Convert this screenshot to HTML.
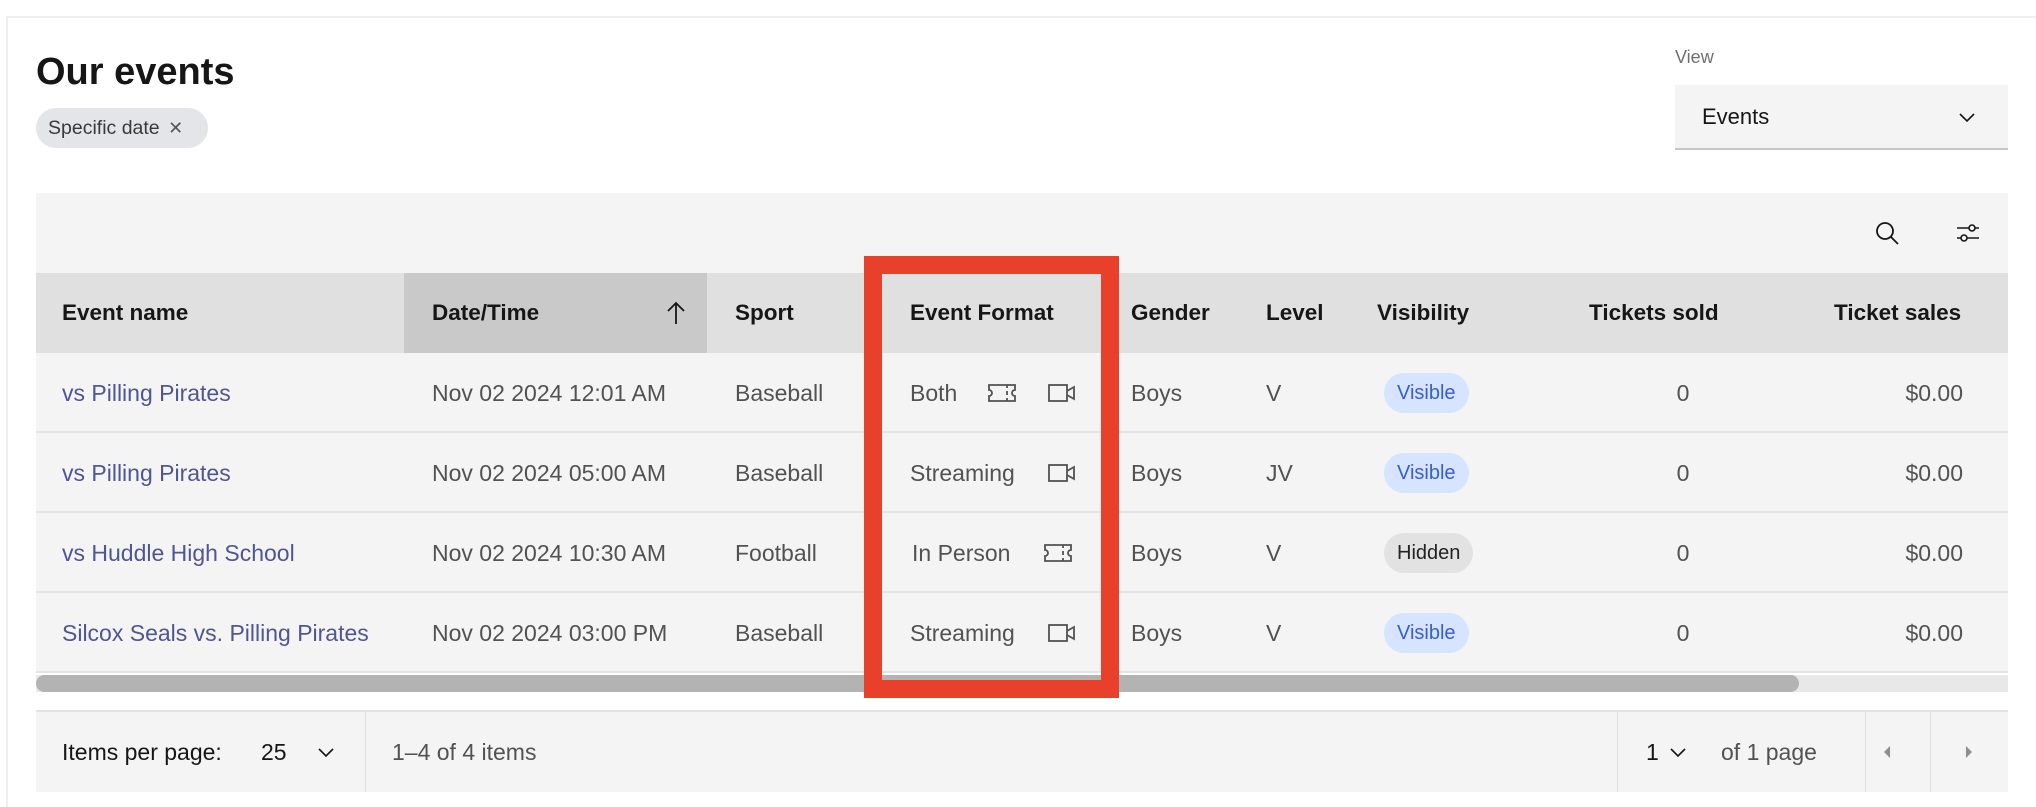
<!DOCTYPE html>
<html><head><meta charset="utf-8"><style>
*{margin:0;padding:0;box-sizing:border-box}
body{width:2036px;height:807px;background:#fff;font-family:"Liberation Sans",sans-serif;position:relative;overflow:hidden;color:#525252}
.a{position:absolute;white-space:nowrap}
.card{position:absolute;left:6px;top:16px;width:2030px;height:791px;border-top:2px solid #f0f0f0;border-left:2px solid #f0f0f0}
.t{font-size:23px;line-height:80px}
.h{font-size:22.5px;font-weight:bold;color:#161616;line-height:80px}
.row{position:absolute;left:36px;width:1972px;height:80px;background:#f4f4f4;border-bottom:2px solid #e4e4e4}
.lnk{color:#4f5690}
.badge{position:absolute;height:40px;border-radius:20px;font-size:20px;line-height:40px;padding:0 13px}
.vis{background:#d6e4ff;color:#3a5fcd}
.hid{background:#e2e2e2;color:#222}
.r{text-align:right;width:200px}
.c{text-align:center;width:100px}
</style></head><body>
<div class="card"></div>
<div class="a" style="left:36px;top:51px;font-size:38px;font-weight:bold;color:#161616">Our events</div>
<div class="a" style="left:36px;top:108px;width:172px;height:40px;border-radius:20px;background:#e3e5e8;font-size:19.5px;line-height:40px;padding-left:12px;color:#393939">Specific date <span style="margin-left:3px;color:#555;font-size:18px">✕</span></div>
<div class="a" style="left:1675px;top:47px;font-size:18px;color:#6f6f6f">View</div>
<div class="a" style="left:1675px;top:85px;width:333px;height:65px;background:#f4f4f4;border-bottom:2px solid #c6c6c6"></div>
<div class="a" style="left:1702px;top:104px;font-size:22px;color:#161616">Events</div>
<svg class="a" style="left:1958px;top:110px" width="18" height="14" viewBox="0 0 18 14"><path d="M2 4l7 7 7-7" fill="none" stroke="#161616" stroke-width="1.6"/></svg>

<div class="a" style="left:36px;top:193px;width:1972px;height:80px;background:#f4f4f4"></div>
<svg class="a" style="left:1874px;top:220px" width="26" height="26" viewBox="0 0 26 26"><circle cx="11" cy="11" r="8" fill="none" stroke="#161616" stroke-width="1.8"/><path d="M17 17l7 7" stroke="#161616" stroke-width="1.8"/></svg>
<svg class="a" style="left:1955px;top:220px" width="26" height="26" viewBox="0 0 26 26" fill="none" stroke="#161616" stroke-width="1.6"><path d="M2 8h22M2 18h22"/><circle cx="17" cy="8" r="3" fill="#f4f4f4"/><circle cx="9" cy="18" r="3" fill="#f4f4f4"/></svg>

<div class="a" style="left:36px;top:273px;width:1972px;height:80px;background:#e0e0e0"></div>
<div class="a" style="left:404px;top:273px;width:303px;height:80px;background:#c9c9c9"></div>
<div class="a h" style="left:62px;top:273px">Event name</div>
<div class="a h" style="left:432px;top:273px">Date/Time</div>
<svg class="a" style="left:666px;top:300px" width="20" height="26" viewBox="0 0 20 26"><path d="M10 24V3M2 11l8-8 8 8" fill="none" stroke="#161616" stroke-width="1.8"/></svg>
<div class="a h" style="left:735px;top:273px">Sport</div>
<div class="a h" style="left:910px;top:273px">Event Format</div>
<div class="a h" style="left:1131px;top:273px">Gender</div>
<div class="a h" style="left:1266px;top:273px">Level</div>
<div class="a h" style="left:1377px;top:273px">Visibility</div>
<div class="a h" style="left:1589px;top:273px">Tickets sold</div>
<div class="a h" style="left:1834px;top:273px">Ticket sales</div>

<div class="row" style="top:353px"></div>
<div class="row" style="top:433px"></div>
<div class="row" style="top:513px"></div>
<div class="row" style="top:593px"></div>

<div class="a t lnk" style="left:62px;top:353px">vs Pilling Pirates</div>
<div class="a t" style="left:432px;top:353px">Nov 02 2024 12:01 AM</div>
<div class="a t" style="left:735px;top:353px">Baseball</div>
<div class="a t" style="left:910px;top:353px">Both</div>
<div class="a t" style="left:1131px;top:353px">Boys</div>
<div class="a t" style="left:1266px;top:353px">V</div>
<div class="badge vis" style="left:1384px;top:373px">Visible</div>
<div class="a t c" style="left:1633px;top:353px">0</div>
<div class="a t r" style="left:1763px;top:353px">$0.00</div>

<div class="a t lnk" style="left:62px;top:433px">vs Pilling Pirates</div>
<div class="a t" style="left:432px;top:433px">Nov 02 2024 05:00 AM</div>
<div class="a t" style="left:735px;top:433px">Baseball</div>
<div class="a t" style="left:910px;top:433px">Streaming</div>
<div class="a t" style="left:1131px;top:433px">Boys</div>
<div class="a t" style="left:1266px;top:433px">JV</div>
<div class="badge vis" style="left:1384px;top:453px">Visible</div>
<div class="a t c" style="left:1633px;top:433px">0</div>
<div class="a t r" style="left:1763px;top:433px">$0.00</div>

<div class="a t lnk" style="left:62px;top:513px">vs Huddle High School</div>
<div class="a t" style="left:432px;top:513px">Nov 02 2024 10:30 AM</div>
<div class="a t" style="left:735px;top:513px">Football</div>
<div class="a t" style="left:912px;top:513px">In Person</div>
<div class="a t" style="left:1131px;top:513px">Boys</div>
<div class="a t" style="left:1266px;top:513px">V</div>
<div class="badge hid" style="left:1384px;top:533px">Hidden</div>
<div class="a t c" style="left:1633px;top:513px">0</div>
<div class="a t r" style="left:1763px;top:513px">$0.00</div>

<div class="a t lnk" style="left:62px;top:593px">Silcox Seals vs. Pilling Pirates</div>
<div class="a t" style="left:432px;top:593px">Nov 02 2024 03:00 PM</div>
<div class="a t" style="left:735px;top:593px">Baseball</div>
<div class="a t" style="left:910px;top:593px">Streaming</div>
<div class="a t" style="left:1131px;top:593px">Boys</div>
<div class="a t" style="left:1266px;top:593px">V</div>
<div class="badge vis" style="left:1384px;top:613px">Visible</div>
<div class="a t c" style="left:1633px;top:593px">0</div>
<div class="a t r" style="left:1763px;top:593px">$0.00</div>

<svg width="0" height="0" style="position:absolute"><defs>
<symbol id="tk" viewBox="0 0 30 22"><path d="M2 3h26v5a3 3 0 0 0 0 6v5H2v-5a3 3 0 0 0 0-6z M20 3v3M20 9v4M20 16v3" fill="none" stroke="#525252" stroke-width="1.8"/></symbol>
<symbol id="vd" viewBox="0 0 30 22"><rect x="2" y="3" width="18" height="16" fill="none" stroke="#525252" stroke-width="1.8"/><path d="M20 9l7-4v12l-7-4" fill="none" stroke="#525252" stroke-width="1.8"/></symbol>
</defs></svg>
<svg class="a" style="left:987px;top:382px" width="30" height="22"><use href="#tk"/></svg>
<svg class="a" style="left:1047px;top:382px" width="30" height="22"><use href="#vd"/></svg>
<svg class="a" style="left:1047px;top:462px" width="30" height="22"><use href="#vd"/></svg>
<svg class="a" style="left:1043px;top:542px" width="30" height="22"><use href="#tk"/></svg>
<svg class="a" style="left:1047px;top:622px" width="30" height="22"><use href="#vd"/></svg>

<div class="a" style="left:36px;top:675px;width:1972px;height:17px;background:#e8e8e8"></div>
<div class="a" style="left:36px;top:675px;width:1763px;height:17px;background:#b3b3b3;border-radius:9px"></div>

<div class="a" style="left:36px;top:710px;width:1972px;height:82px;background:#f4f4f4;border-top:2px solid #e4e4e4"></div>
<div class="a" style="left:365px;top:712px;width:1px;height:80px;background:#e0e0e0"></div>
<div class="a" style="left:1617px;top:712px;width:1px;height:80px;background:#e0e0e0"></div>
<div class="a" style="left:1865px;top:712px;width:1px;height:80px;background:#e0e0e0"></div>
<div class="a" style="left:1930px;top:712px;width:1px;height:80px;background:#e0e0e0"></div>
<div class="a t" style="left:62px;top:712px;color:#161616">Items per page:</div>
<div class="a t" style="left:261px;top:712px;color:#161616">25</div>
<svg class="a" style="left:317px;top:745px" width="18" height="14" viewBox="0 0 18 14"><path d="M2 4l7 7 7-7" fill="none" stroke="#161616" stroke-width="1.6"/></svg>
<div class="a t" style="left:392px;top:712px">1–4 of 4 items</div>
<div class="a t" style="left:1646px;top:712px;color:#161616">1</div>
<svg class="a" style="left:1669px;top:745px" width="18" height="14" viewBox="0 0 18 14"><path d="M2 4l7 7 7-7" fill="none" stroke="#161616" stroke-width="1.6"/></svg>
<div class="a t" style="left:1721px;top:712px">of 1 page</div>
<svg class="a" style="left:1882px;top:744px" width="10" height="16"><path d="M8 2v12L2 8z" fill="#8d8d8d"/></svg>
<svg class="a" style="left:1964px;top:744px" width="10" height="16"><path d="M2 2v12l6-6z" fill="#8d8d8d"/></svg>

<div class="a" style="left:864px;top:256px;width:255px;height:442px;border:18px solid #e8402a"></div>
</body></html>
